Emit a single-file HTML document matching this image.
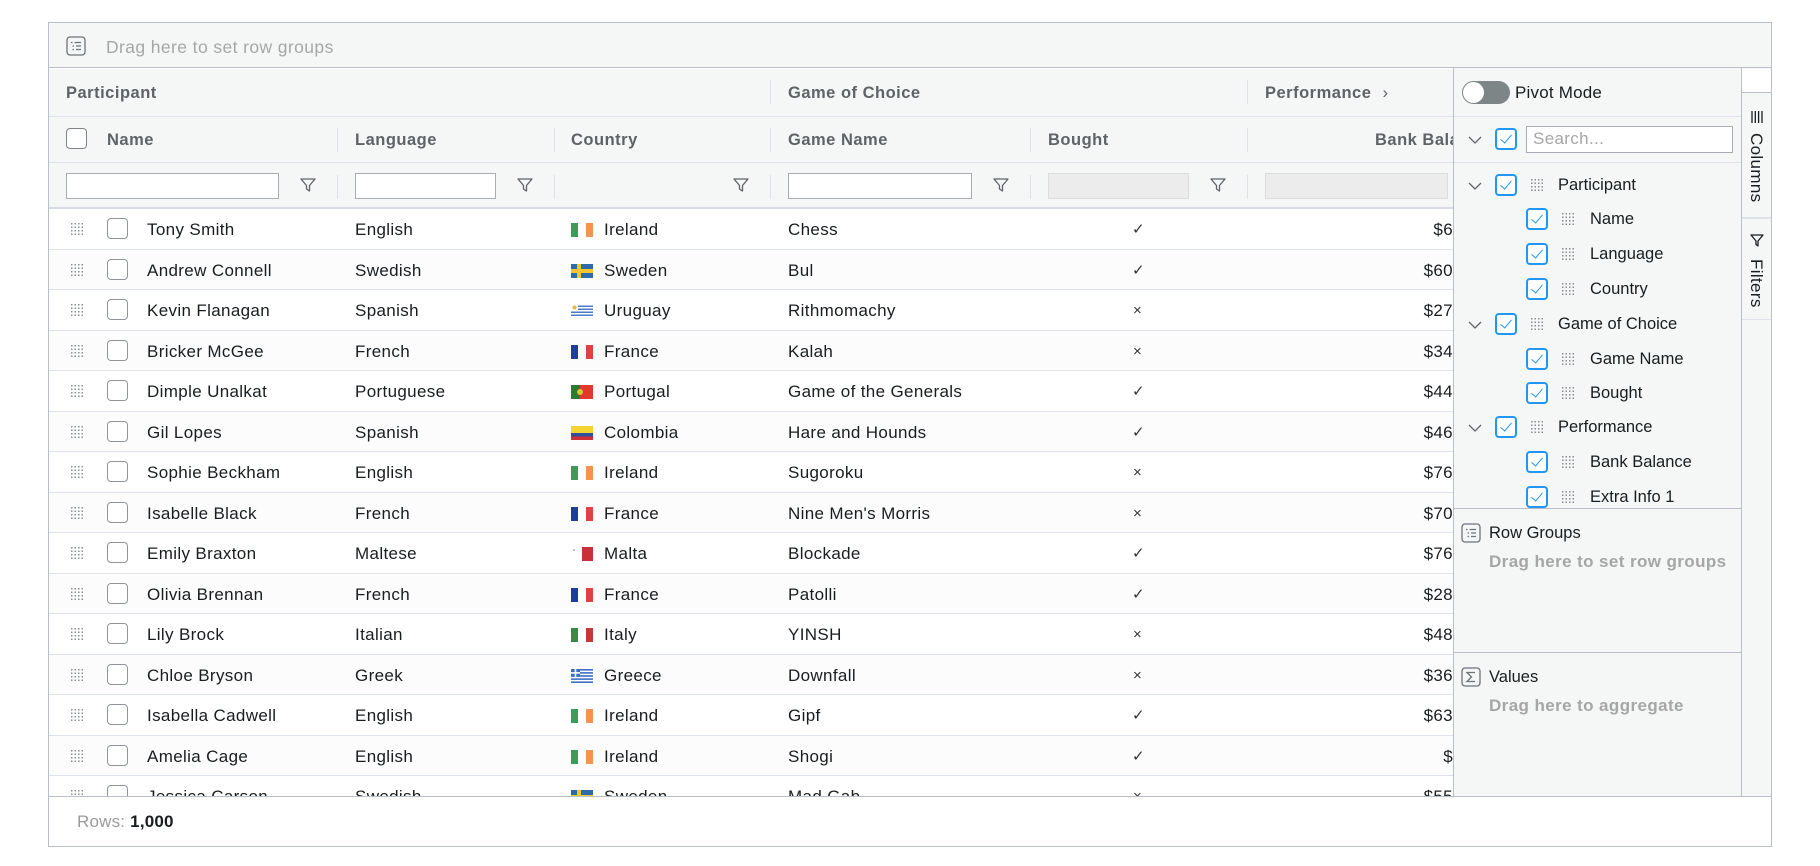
<!DOCTYPE html>
<html><head><meta charset="utf-8">
<style>
*{box-sizing:border-box;margin:0;padding:0}
body{width:1820px;height:866px;background:#fff;font-family:"Liberation Sans",Arial,sans-serif;color:#181d1f;position:relative;overflow:hidden;font-size:17px;letter-spacing:0.35px}
.a{position:absolute}
.grid{left:48px;top:22px;width:1724px;height:825px;border:1px solid #babfc7}
.hd{color:#5f6368;font-weight:bold;font-size:16.5px;letter-spacing:0.5px}
.hint{color:#a6a6a6}
.vl{position:absolute;width:1px;background:#dde2eb}
.body{left:49px;top:209px;width:1404px;height:587px;overflow:hidden}
.r{position:absolute;left:0;width:1404px;height:40.5px;border-bottom:1px solid #dde2eb}
.r:nth-child(even){background:#fcfcfd}
.r span{position:absolute;top:1px;line-height:40px;white-space:nowrap}
.r span.m{font-size:15px;color:#333}
.cb{position:absolute;width:21px;height:21px;border:1.5px solid #8f9499;border-radius:4px;background:#fff}
.ck{position:absolute;width:22px;height:22px;border:2px solid #2196f3;border-radius:4px;background:#fff}
.ck:after{content:"";position:absolute;left:6px;top:2px;width:5px;height:10px;border-right:1.5px solid #2196f3;border-bottom:1.5px solid #2196f3;transform:rotate(40deg)}
.inp{position:absolute;height:26px;border:1px solid #a8adb3;background:#fff}
.dis{background:#ececec;border-color:#dcdcdc}
.fl{position:absolute;top:14px;width:22px;height:14px}
.tl{position:absolute;font-size:17px;letter-spacing:0.4px;white-space:nowrap}
.tv{position:absolute;font-size:16.5px;letter-spacing:0;white-space:nowrap}
</style></head><body>
<svg width="0" height="0" style="position:absolute"><defs>
<g id="grip" fill="#8a8f94"><rect x="0" y="0" width="1.5" height="1.5"/><rect x="3.5" y="0" width="1.5" height="1.5"/><rect x="7" y="0" width="1.5" height="1.5"/><rect x="10.5" y="0" width="1.5" height="1.5"/><rect x="0" y="3.5" width="1.5" height="1.5"/><rect x="3.5" y="3.5" width="1.5" height="1.5"/><rect x="7" y="3.5" width="1.5" height="1.5"/><rect x="10.5" y="3.5" width="1.5" height="1.5"/><rect x="0" y="7" width="1.5" height="1.5"/><rect x="3.5" y="7" width="1.5" height="1.5"/><rect x="7" y="7" width="1.5" height="1.5"/><rect x="10.5" y="7" width="1.5" height="1.5"/><rect x="0" y="10.5" width="1.5" height="1.5"/><rect x="3.5" y="10.5" width="1.5" height="1.5"/><rect x="7" y="10.5" width="1.5" height="1.5"/><rect x="10.5" y="10.5" width="1.5" height="1.5"/></g>
<path id="filt" d="M1 2h14l-5.5 6.5v5.5l-3-2v-3.5z" fill="none" stroke="#5f6368" stroke-width="1.3" stroke-linejoin="round"/>
<g id="ie"><rect width="7" height="14" fill="#3e9a5b"/><rect x="7.5" width="7" height="14" fill="#fff"/><rect x="15" width="7" height="14" fill="#f29450"/></g>
<g id="se"><rect width="22" height="14" fill="#2f6aa8"/><rect x="6" width="4" height="14" fill="#f2c630"/><rect y="5" width="22" height="4" fill="#f2c630"/></g>
<g id="uy"><rect width="22" height="14" fill="#fff"/><rect x="7" y="1.5" width="15" height="1.5" fill="#4d7bc7"/><rect x="7" y="4.5" width="15" height="1.5" fill="#4d7bc7"/><rect y="7.5" width="22" height="1.5" fill="#4d7bc7"/><rect y="10.5" width="22" height="1.5" fill="#4d7bc7"/><circle cx="3.5" cy="3.5" r="2" fill="#e8b83a"/></g>
<g id="fr"><rect width="7" height="14" fill="#1f3d9a"/><rect x="7.5" width="7" height="14" fill="#fff"/><rect x="15" width="7" height="14" fill="#e04242"/></g>
<g id="pt"><rect width="9" height="14" fill="#2b7a30"/><rect x="9" width="13" height="14" fill="#e03a2f"/><circle cx="9" cy="7" r="3" fill="#e8c030"/></g>
<g id="co"><rect width="22" height="7" fill="#f2d432"/><rect y="7" width="22" height="3.5" fill="#2d4f9e"/><rect y="10.5" width="22" height="3.5" fill="#cf3038"/></g>
<g id="mt"><rect width="11" height="14" fill="#fff"/><rect x="11" width="11" height="14" fill="#c9303a"/><rect x="2" y="2" width="2" height="2" fill="#bbb"/></g>
<g id="it"><rect width="7" height="14" fill="#3a8a45"/><rect x="7.5" width="7" height="14" fill="#fff"/><rect x="15" width="7" height="14" fill="#c83737"/></g>
<g id="gr"><rect width="22" height="14" fill="#fff"/><rect y="0" width="22" height="1.6" fill="#3c6fc4"/><rect y="3.1" width="22" height="1.6" fill="#3c6fc4"/><rect y="6.2" width="22" height="1.6" fill="#3c6fc4"/><rect y="9.3" width="22" height="1.6" fill="#3c6fc4"/><rect y="12.4" width="22" height="1.6" fill="#3c6fc4"/><rect width="9" height="7.8" fill="#3c6fc4"/><rect x="3.7" width="1.6" height="7.8" fill="#fff"/><rect y="3.1" width="9" height="1.6" fill="#fff"/></g>
</defs></svg>

<div class="a grid"></div>
<div class="a" style="left:49px;top:23px;width:1722px;height:45px;background:#f5f6f6;border-bottom:1px solid #babfc7"></div>
<svg class="a" style="left:66px;top:36px" width="20" height="20" viewBox="0 0 20 20"><rect x="1" y="1" width="18" height="18" rx="3" fill="none" stroke="#6f7478" stroke-width="1.3"/><path d="M5 6.5h1.5M8.5 6.5h6.5M6.5 10h1.5M10 10h5M6.5 13.5h1.5M10 13.5h5" stroke="#6f7478" stroke-width="1.3"/></svg>
<div class="a hint" style="left:106px;top:36px;font-size:17.5px;letter-spacing:0.4px;line-height:22px">Drag here to set row groups</div>

<div class="a" style="left:49px;top:69px;width:1404px;height:140px;background:#f5f6f6"></div>
<div class="a" style="left:49px;top:116px;width:1404px;height:1px;background:#dde2eb"></div>
<div class="a" style="left:49px;top:162px;width:1404px;height:1px;background:#dde2eb"></div>
<div class="a" style="left:49px;top:207px;width:1404px;height:2px;background:#d6dbe2"></div>
<div class="a hd" style="left:66px;top:84px">Participant</div>
<div class="vl" style="left:770px;top:80px;height:24px"></div>
<div class="a hd" style="left:788px;top:84px">Game of Choice</div>
<div class="vl" style="left:1247px;top:80px;height:24px"></div>
<div class="a hd" style="left:1265px;top:84px">Performance <span style="font-weight:normal;margin-left:6px">&#8250;</span></div>

<div class="cb" style="left:66px;top:128px;border-color:#7f858a"></div>
<div class="a hd" style="left:107px;top:131px">Name</div>
<div class="vl" style="left:337px;top:128px;height:24px"></div>
<div class="a hd" style="left:355px;top:131px">Language</div>
<div class="vl" style="left:554px;top:128px;height:24px"></div>
<div class="a hd" style="left:571px;top:131px">Country</div>
<div class="vl" style="left:770px;top:128px;height:24px"></div>
<div class="a hd" style="left:788px;top:131px">Game Name</div>
<div class="vl" style="left:1030px;top:128px;height:24px"></div>
<div class="a hd" style="left:1048px;top:131px">Bought</div>
<div class="vl" style="left:1247px;top:128px;height:24px"></div>
<div class="a hd" style="left:1375px;top:131px;width:78px;overflow:hidden;white-space:nowrap">Bank Balance</div>

<div class="inp" style="left:66px;top:173px;width:213px"></div>
<svg class="a" style="left:300px;top:177px" width="16" height="16"><use href="#filt"/></svg>
<div class="vl" style="left:337px;top:175px;height:24px"></div>
<div class="inp" style="left:355px;top:173px;width:141px"></div>
<svg class="a" style="left:517px;top:177px" width="16" height="16"><use href="#filt"/></svg>
<div class="vl" style="left:554px;top:175px;height:24px"></div>
<svg class="a" style="left:733px;top:177px" width="16" height="16"><use href="#filt"/></svg>
<div class="vl" style="left:770px;top:175px;height:24px"></div>
<div class="inp" style="left:788px;top:173px;width:184px"></div>
<svg class="a" style="left:993px;top:177px" width="16" height="16"><use href="#filt"/></svg>
<div class="vl" style="left:1030px;top:175px;height:24px"></div>
<div class="inp dis" style="left:1048px;top:173px;width:141px"></div>
<svg class="a" style="left:1210px;top:177px" width="16" height="16"><use href="#filt"/></svg>
<div class="vl" style="left:1247px;top:175px;height:24px"></div>
<div class="inp dis" style="left:1265px;top:173px;width:183px"></div>

<div class="a body">
<div class="r" style="top:0px"><svg class="a" style="left:22px;top:14px" width="13" height="13"><use href="#grip"/></svg><div class="cb" style="left:58px;top:9px"></div><span style="left:98px">Tony Smith</span><span style="left:306px">English</span><svg class="fl" style="left:522px"><use href="#ie"/></svg><span style="left:555px">Ireland</span><span style="left:739px">Chess</span><span class="m" style="left:1083px">✓</span><span style="right:0">$6</span></div>
<div class="r" style="top:40.5px"><svg class="a" style="left:22px;top:14px" width="13" height="13"><use href="#grip"/></svg><div class="cb" style="left:58px;top:9px"></div><span style="left:98px">Andrew Connell</span><span style="left:306px">Swedish</span><svg class="fl" style="left:522px"><use href="#se"/></svg><span style="left:555px">Sweden</span><span style="left:739px">Bul</span><span class="m" style="left:1083px">✓</span><span style="right:0">$60</span></div>
<div class="r" style="top:81px"><svg class="a" style="left:22px;top:14px" width="13" height="13"><use href="#grip"/></svg><div class="cb" style="left:58px;top:9px"></div><span style="left:98px">Kevin Flanagan</span><span style="left:306px">Spanish</span><svg class="fl" style="left:522px"><use href="#uy"/></svg><span style="left:555px">Uruguay</span><span style="left:739px">Rithmomachy</span><span class="m" style="left:1084px">×</span><span style="right:0">$27</span></div>
<div class="r" style="top:121.5px"><svg class="a" style="left:22px;top:14px" width="13" height="13"><use href="#grip"/></svg><div class="cb" style="left:58px;top:9px"></div><span style="left:98px">Bricker McGee</span><span style="left:306px">French</span><svg class="fl" style="left:522px"><use href="#fr"/></svg><span style="left:555px">France</span><span style="left:739px">Kalah</span><span class="m" style="left:1084px">×</span><span style="right:0">$34</span></div>
<div class="r" style="top:162px"><svg class="a" style="left:22px;top:14px" width="13" height="13"><use href="#grip"/></svg><div class="cb" style="left:58px;top:9px"></div><span style="left:98px">Dimple Unalkat</span><span style="left:306px">Portuguese</span><svg class="fl" style="left:522px"><use href="#pt"/></svg><span style="left:555px">Portugal</span><span style="left:739px">Game of the Generals</span><span class="m" style="left:1083px">✓</span><span style="right:0">$44</span></div>
<div class="r" style="top:202.5px"><svg class="a" style="left:22px;top:14px" width="13" height="13"><use href="#grip"/></svg><div class="cb" style="left:58px;top:9px"></div><span style="left:98px">Gil Lopes</span><span style="left:306px">Spanish</span><svg class="fl" style="left:522px"><use href="#co"/></svg><span style="left:555px">Colombia</span><span style="left:739px">Hare and Hounds</span><span class="m" style="left:1083px">✓</span><span style="right:0">$46</span></div>
<div class="r" style="top:243px"><svg class="a" style="left:22px;top:14px" width="13" height="13"><use href="#grip"/></svg><div class="cb" style="left:58px;top:9px"></div><span style="left:98px">Sophie Beckham</span><span style="left:306px">English</span><svg class="fl" style="left:522px"><use href="#ie"/></svg><span style="left:555px">Ireland</span><span style="left:739px">Sugoroku</span><span class="m" style="left:1084px">×</span><span style="right:0">$76</span></div>
<div class="r" style="top:283.5px"><svg class="a" style="left:22px;top:14px" width="13" height="13"><use href="#grip"/></svg><div class="cb" style="left:58px;top:9px"></div><span style="left:98px">Isabelle Black</span><span style="left:306px">French</span><svg class="fl" style="left:522px"><use href="#fr"/></svg><span style="left:555px">France</span><span style="left:739px">Nine Men's Morris</span><span class="m" style="left:1084px">×</span><span style="right:0">$70</span></div>
<div class="r" style="top:324px"><svg class="a" style="left:22px;top:14px" width="13" height="13"><use href="#grip"/></svg><div class="cb" style="left:58px;top:9px"></div><span style="left:98px">Emily Braxton</span><span style="left:306px">Maltese</span><svg class="fl" style="left:522px"><use href="#mt"/></svg><span style="left:555px">Malta</span><span style="left:739px">Blockade</span><span class="m" style="left:1083px">✓</span><span style="right:0">$76</span></div>
<div class="r" style="top:364.5px"><svg class="a" style="left:22px;top:14px" width="13" height="13"><use href="#grip"/></svg><div class="cb" style="left:58px;top:9px"></div><span style="left:98px">Olivia Brennan</span><span style="left:306px">French</span><svg class="fl" style="left:522px"><use href="#fr"/></svg><span style="left:555px">France</span><span style="left:739px">Patolli</span><span class="m" style="left:1083px">✓</span><span style="right:0">$28</span></div>
<div class="r" style="top:405px"><svg class="a" style="left:22px;top:14px" width="13" height="13"><use href="#grip"/></svg><div class="cb" style="left:58px;top:9px"></div><span style="left:98px">Lily Brock</span><span style="left:306px">Italian</span><svg class="fl" style="left:522px"><use href="#it"/></svg><span style="left:555px">Italy</span><span style="left:739px">YINSH</span><span class="m" style="left:1084px">×</span><span style="right:0">$48</span></div>
<div class="r" style="top:445.5px"><svg class="a" style="left:22px;top:14px" width="13" height="13"><use href="#grip"/></svg><div class="cb" style="left:58px;top:9px"></div><span style="left:98px">Chloe Bryson</span><span style="left:306px">Greek</span><svg class="fl" style="left:522px"><use href="#gr"/></svg><span style="left:555px">Greece</span><span style="left:739px">Downfall</span><span class="m" style="left:1084px">×</span><span style="right:0">$36</span></div>
<div class="r" style="top:486px"><svg class="a" style="left:22px;top:14px" width="13" height="13"><use href="#grip"/></svg><div class="cb" style="left:58px;top:9px"></div><span style="left:98px">Isabella Cadwell</span><span style="left:306px">English</span><svg class="fl" style="left:522px"><use href="#ie"/></svg><span style="left:555px">Ireland</span><span style="left:739px">Gipf</span><span class="m" style="left:1083px">✓</span><span style="right:0">$63</span></div>
<div class="r" style="top:526.5px"><svg class="a" style="left:22px;top:14px" width="13" height="13"><use href="#grip"/></svg><div class="cb" style="left:58px;top:9px"></div><span style="left:98px">Amelia Cage</span><span style="left:306px">English</span><svg class="fl" style="left:522px"><use href="#ie"/></svg><span style="left:555px">Ireland</span><span style="left:739px">Shogi</span><span class="m" style="left:1083px">✓</span><span style="right:0">$</span></div>
<div class="r" style="top:567px"><svg class="a" style="left:22px;top:14px" width="13" height="13"><use href="#grip"/></svg><div class="cb" style="left:58px;top:9px"></div><span style="left:98px">Jessica Carson</span><span style="left:306px">Swedish</span><svg class="fl" style="left:522px"><use href="#se"/></svg><span style="left:555px">Sweden</span><span style="left:739px">Mad Gab</span><span class="m" style="left:1084px">×</span><span style="right:0">$55</span></div>
</div>

<div class="a" style="left:49px;top:796px;width:1722px;height:1px;background:#babfc7"></div>
<div class="a" style="left:77px;top:812px;font-size:17px;letter-spacing:0.2px"><span style="color:#9a9a9a">Rows:</span> <b>1,000</b></div>

<div class="a" style="left:1453px;top:68px;width:288px;height:728px;background:#f5f6f6;border-left:1px solid #babfc7"></div>
<div class="a" style="left:1454px;top:116px;width:287px;height:1px;background:#dde2eb"></div>
<div class="a" style="left:1454px;top:162px;width:287px;height:1px;background:#dde2eb"></div>
<div class="a" style="left:1462px;top:81px;width:48px;height:23px;border-radius:12px;background:#7e8587"></div>
<div class="a" style="left:1463px;top:82px;width:21px;height:21px;border-radius:50%;background:#fff"></div>
<div class="a tl" style="left:1515px;top:83px;letter-spacing:0.2px">Pivot Mode</div>
<svg class="a" style="left:1468px;top:135px" width="14" height="10"><path d="M1 2l6 6 6-6" fill="none" stroke="#5f6368" stroke-width="1.3"/></svg>
<div class="ck" style="left:1495px;top:128px"></div>
<div class="inp" style="left:1526px;top:126px;width:207px;height:27px;border-color:#a8adb3;color:#a6a6a6;font-size:17px;line-height:24px;padding-left:6px">Search...</div>

<svg class="a" style="left:1468px;top:181px" width="14" height="10"><path d="M1 2l6 6 6-6" fill="none" stroke="#5f6368" stroke-width="1.3"/></svg>
<div class="ck" style="left:1495px;top:174px"></div>
<svg class="a" style="left:1531px;top:179px" width="13" height="13"><use href="#grip"/></svg>
<div class="tv" style="left:1558px;top:176px">Participant</div>
<div class="ck" style="left:1526px;top:208px"></div><svg class="a" style="left:1562px;top:213px" width="13" height="13"><use href="#grip"/></svg><div class="tv" style="left:1590px;top:210px">Name</div>
<div class="ck" style="left:1526px;top:243px"></div><svg class="a" style="left:1562px;top:248px" width="13" height="13"><use href="#grip"/></svg><div class="tv" style="left:1590px;top:245px">Language</div>
<div class="ck" style="left:1526px;top:278px"></div><svg class="a" style="left:1562px;top:283px" width="13" height="13"><use href="#grip"/></svg><div class="tv" style="left:1590px;top:280px">Country</div>
<svg class="a" style="left:1468px;top:320px" width="14" height="10"><path d="M1 2l6 6 6-6" fill="none" stroke="#5f6368" stroke-width="1.3"/></svg>
<div class="ck" style="left:1495px;top:313px"></div><svg class="a" style="left:1531px;top:318px" width="13" height="13"><use href="#grip"/></svg><div class="tv" style="left:1558px;top:315px">Game of Choice</div>
<div class="ck" style="left:1526px;top:348px"></div><svg class="a" style="left:1562px;top:353px" width="13" height="13"><use href="#grip"/></svg><div class="tv" style="left:1590px;top:350px">Game Name</div>
<div class="ck" style="left:1526px;top:382px"></div><svg class="a" style="left:1562px;top:387px" width="13" height="13"><use href="#grip"/></svg><div class="tv" style="left:1590px;top:384px">Bought</div>
<svg class="a" style="left:1468px;top:423px" width="14" height="10"><path d="M1 2l6 6 6-6" fill="none" stroke="#5f6368" stroke-width="1.3"/></svg>
<div class="ck" style="left:1495px;top:416px"></div><svg class="a" style="left:1531px;top:421px" width="13" height="13"><use href="#grip"/></svg><div class="tv" style="left:1558px;top:418px">Performance</div>
<div class="ck" style="left:1526px;top:451px"></div><svg class="a" style="left:1562px;top:456px" width="13" height="13"><use href="#grip"/></svg><div class="tv" style="left:1590px;top:453px">Bank Balance</div>
<div class="ck" style="left:1526px;top:486px"></div><svg class="a" style="left:1562px;top:491px" width="13" height="13"><use href="#grip"/></svg><div class="tv" style="left:1590px;top:488px">Extra Info 1</div>
<div class="a" style="left:1454px;top:508px;width:287px;height:1px;background:#babfc7"></div>
<svg class="a" style="left:1461px;top:523px" width="20" height="20" viewBox="0 0 20 20"><rect x="1" y="1" width="18" height="18" rx="3" fill="none" stroke="#6f7478" stroke-width="1.3"/><path d="M5 6.5h1.5M8.5 6.5h6.5M6.5 10h1.5M10 10h5M6.5 13.5h1.5M10 13.5h5" stroke="#6f7478" stroke-width="1.3"/></svg>
<div class="tv" style="left:1489px;top:524px">Row Groups</div>
<div class="tl hint" style="left:1489px;top:552px;font-weight:bold">Drag here to set row groups</div>
<div class="a" style="left:1454px;top:652px;width:287px;height:1px;background:#babfc7"></div>
<svg class="a" style="left:1461px;top:667px" width="20" height="20" viewBox="0 0 20 20"><rect x="1" y="1" width="18" height="18" rx="3" fill="none" stroke="#6f7478" stroke-width="1.3"/><path d="M14 5.5H6l4.5 4.5L6 14.5h8" fill="none" stroke="#6f7478" stroke-width="1.3"/></svg>
<div class="tv" style="left:1489px;top:668px">Values</div>
<div class="tl hint" style="left:1489px;top:696px;font-weight:bold">Drag here to aggregate</div>

<div class="a" style="left:1741px;top:68px;width:30px;height:728px;background:#f5f6f6;border-left:1px solid #babfc7"></div>
<div class="a" style="left:1742px;top:69px;width:29px;height:24px;background:#fff;border-bottom:1px solid #babfc7"></div>
<div class="a" style="left:1742px;top:217px;width:29px;height:2px;background:#dde2eb"></div>
<div class="a" style="left:1742px;top:319px;width:29px;height:1px;background:#dde2eb"></div>
<svg class="a" style="left:1750px;top:110px" width="14" height="14"><path d="M2 1v12M5.3 1v12M8.6 1v12M12 1v12" stroke="#181d1f" stroke-width="1.3"/></svg>
<div class="a" style="left:1747px;top:133px;width:20px;height:80px"><div style="transform:rotate(90deg);transform-origin:0 0;position:absolute;left:19px;top:0;font-size:17px;white-space:nowrap">Columns</div></div>
<svg class="a" style="left:1749px;top:233px" width="16" height="16"><path d="M2 2h12l-5 6v5l-2-1.5V8z" fill="none" stroke="#181d1f" stroke-width="1.3" stroke-linejoin="round"/></svg>
<div class="a" style="left:1747px;top:259px;width:20px;height:60px"><div style="transform:rotate(90deg);transform-origin:0 0;position:absolute;left:19px;top:0;font-size:17px;white-space:nowrap">Filters</div></div>
</body></html>
